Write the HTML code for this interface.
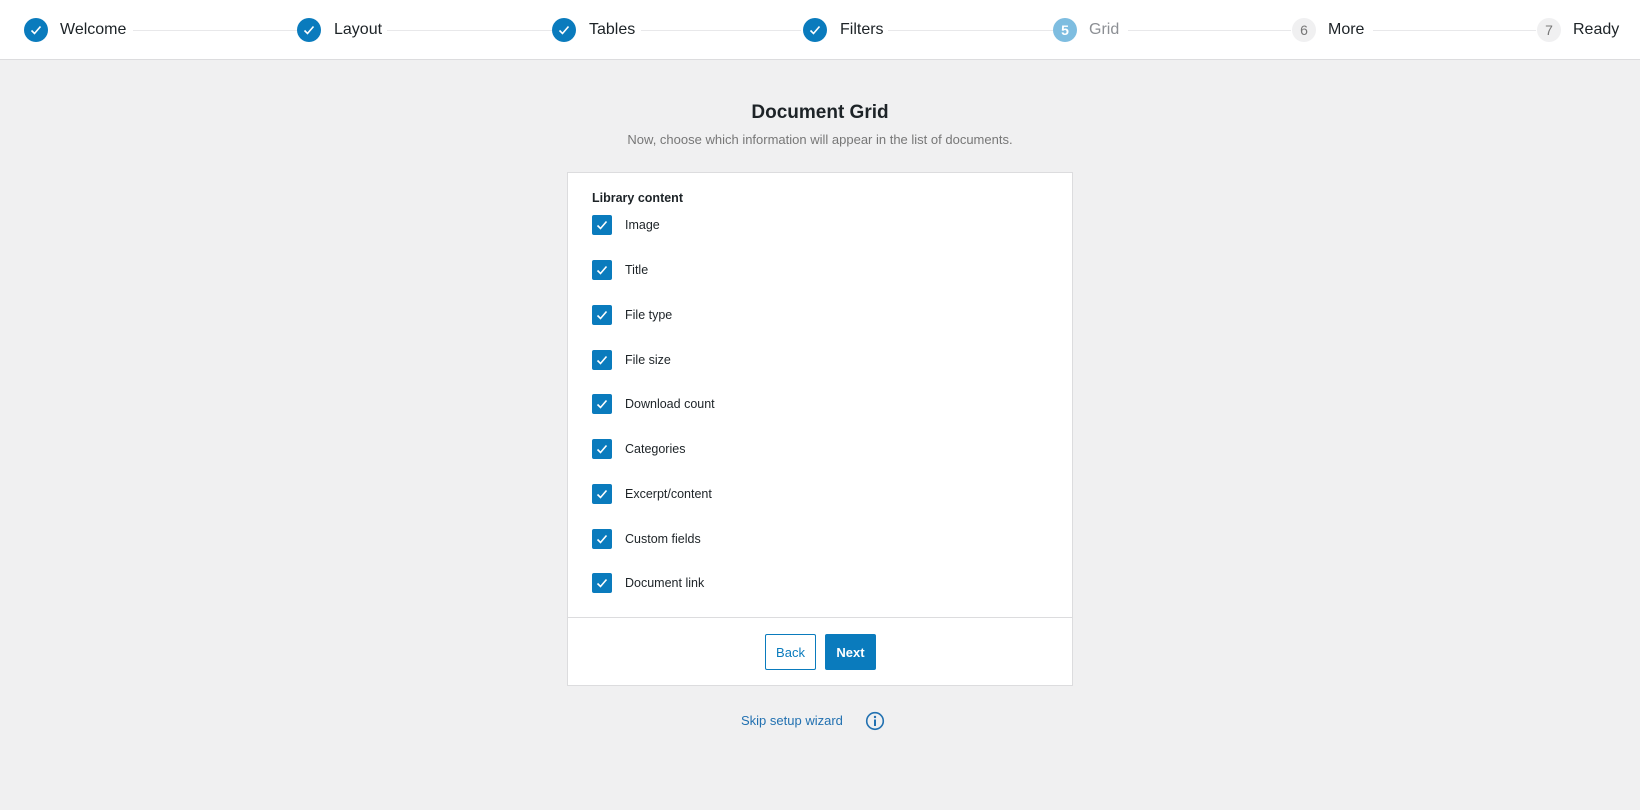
<!DOCTYPE html>
<html><head><meta charset="utf-8"><style>
*{margin:0;padding:0;box-sizing:border-box}
body{width:1640px;height:810px;background:#f0f0f1;font-family:"Liberation Sans",sans-serif;position:relative;overflow:hidden;color:#1d2327}
.hdr{position:absolute;left:0;top:0;width:1640px;height:60px;background:#fff;border-bottom:1px solid #dcdcde}
.c{position:absolute;top:18px;width:24px;height:24px;border-radius:50%;display:flex;align-items:center;justify-content:center;font-size:14px}
.done{background:#0a7bbd}
.cur{background:#7ebde0;color:#fff;font-weight:bold}
.todo{background:#f0f0f1;color:#777}
.lb{position:absolute;top:21px;font-size:16px;color:#1d2327}
.ln{position:absolute;top:30px;height:1px;background:#e8e8ea}
h1{position:absolute;left:0;width:1640px;top:102px;text-align:center;font-size:19px;font-weight:bold;color:#1d2327}
.sub{position:absolute;left:0;width:1640px;top:132px;text-align:center;font-size:13px;color:#777}
.card{position:absolute;left:567px;top:172px;width:506px;height:514px;background:#fff;border:1px solid #dcdcde}
.lc{position:absolute;left:24px;top:18px;font-size:12.5px;font-weight:bold}
.it{position:absolute;left:24px;width:20px;height:20px;background:#0a7bbd;border-radius:2px}
.it svg{position:absolute;left:3px;top:3px}
.tx{position:absolute;left:57px;font-size:12.5px}
.div{position:absolute;left:0;top:444px;width:504px;height:1px;background:#dcdcde}
.btn{position:absolute;top:461px;height:36px;width:51px;border-radius:2px;font-size:13px;display:flex;align-items:center;justify-content:center}
.back{left:197px;border:1px solid #0a7bbd;color:#0a7bbd;background:#fff}
.next{left:257px;background:#0a7bbd;color:#fff;font-weight:bold}
.skip{position:absolute;left:741px;top:713px;font-size:13px;color:#2271b1}
</style></head><body>
<div class="hdr">
<div class="ln" style="left:133px;width:175px"></div>
<div class="ln" style="left:387px;width:165px"></div>
<div class="ln" style="left:641px;width:160px"></div>
<div class="ln" style="left:888px;width:165px"></div>
<div class="ln" style="left:1128px;width:163px"></div>
<div class="ln" style="left:1373px;width:163px"></div>
<div class="c done" style="left:24px"><svg width="14" height="14" viewBox="0 0 14 14"><path d="M2.5 7.5l3 3 6-7" fill="none" stroke="#fff" stroke-width="1.6"/></svg></div><div class="lb" style="left:60px">Welcome</div>
<div class="c done" style="left:297px"><svg width="14" height="14" viewBox="0 0 14 14"><path d="M2.5 7.5l3 3 6-7" fill="none" stroke="#fff" stroke-width="1.6"/></svg></div><div class="lb" style="left:334px">Layout</div>
<div class="c done" style="left:552px"><svg width="14" height="14" viewBox="0 0 14 14"><path d="M2.5 7.5l3 3 6-7" fill="none" stroke="#fff" stroke-width="1.6"/></svg></div><div class="lb" style="left:589px">Tables</div>
<div class="c done" style="left:803px"><svg width="14" height="14" viewBox="0 0 14 14"><path d="M2.5 7.5l3 3 6-7" fill="none" stroke="#fff" stroke-width="1.6"/></svg></div><div class="lb" style="left:840px">Filters</div>
<div class="c cur" style="left:1053px">5</div><div class="lb" style="left:1089px;color:#8c8f94">Grid</div>
<div class="c todo" style="left:1292px">6</div><div class="lb" style="left:1328px">More</div>
<div class="c todo" style="left:1537px">7</div><div class="lb" style="left:1573px">Ready</div>
</div>
<h1>Document Grid</h1>
<div class="sub">Now, choose which information will appear in the list of documents.</div>
<div class="card">
<div class="lc">Library content</div>
<div class="it" style="top:42px"><svg width="14" height="14" viewBox="0 0 14 14"><path d="M2.5 7.5l3 3 6-7" fill="none" stroke="#fff" stroke-width="1.6"/></svg></div><div class="tx" style="top:45px">Image</div>
<div class="it" style="top:87px"><svg width="14" height="14" viewBox="0 0 14 14"><path d="M2.5 7.5l3 3 6-7" fill="none" stroke="#fff" stroke-width="1.6"/></svg></div><div class="tx" style="top:90px">Title</div>
<div class="it" style="top:132px"><svg width="14" height="14" viewBox="0 0 14 14"><path d="M2.5 7.5l3 3 6-7" fill="none" stroke="#fff" stroke-width="1.6"/></svg></div><div class="tx" style="top:135px">File type</div>
<div class="it" style="top:177px"><svg width="14" height="14" viewBox="0 0 14 14"><path d="M2.5 7.5l3 3 6-7" fill="none" stroke="#fff" stroke-width="1.6"/></svg></div><div class="tx" style="top:180px">File size</div>
<div class="it" style="top:221px"><svg width="14" height="14" viewBox="0 0 14 14"><path d="M2.5 7.5l3 3 6-7" fill="none" stroke="#fff" stroke-width="1.6"/></svg></div><div class="tx" style="top:224px">Download count</div>
<div class="it" style="top:266px"><svg width="14" height="14" viewBox="0 0 14 14"><path d="M2.5 7.5l3 3 6-7" fill="none" stroke="#fff" stroke-width="1.6"/></svg></div><div class="tx" style="top:269px">Categories</div>
<div class="it" style="top:311px"><svg width="14" height="14" viewBox="0 0 14 14"><path d="M2.5 7.5l3 3 6-7" fill="none" stroke="#fff" stroke-width="1.6"/></svg></div><div class="tx" style="top:314px">Excerpt/content</div>
<div class="it" style="top:356px"><svg width="14" height="14" viewBox="0 0 14 14"><path d="M2.5 7.5l3 3 6-7" fill="none" stroke="#fff" stroke-width="1.6"/></svg></div><div class="tx" style="top:359px">Custom fields</div>
<div class="it" style="top:400px"><svg width="14" height="14" viewBox="0 0 14 14"><path d="M2.5 7.5l3 3 6-7" fill="none" stroke="#fff" stroke-width="1.6"/></svg></div><div class="tx" style="top:403px">Document link</div>
<div class="div"></div>
<div class="btn back">Back</div>
<div class="btn next">Next</div>
</div>
<div class="skip">Skip setup wizard</div>
<svg style="position:absolute;left:865px;top:711px" width="20" height="20" viewBox="0 0 20 20"><circle cx="10" cy="10" r="8.3" fill="none" stroke="#2271b1" stroke-width="1.6"/><circle cx="10" cy="6" r="1.2" fill="#2271b1"/><rect x="9" y="8.5" width="2" height="6.5" fill="#2271b1"/></svg>
</body></html>
